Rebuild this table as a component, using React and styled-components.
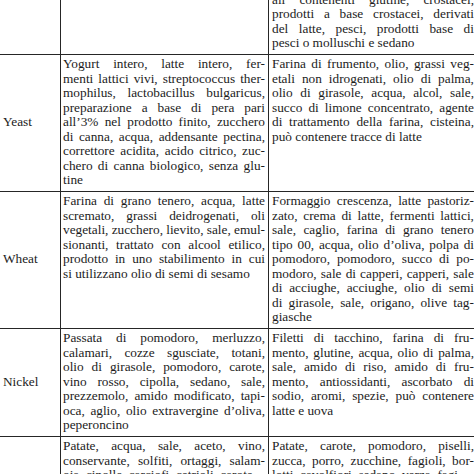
import React from "react";
import styled, { createGlobalStyle } from "styled-components";

const Global = createGlobalStyle`
  html, body { margin: 0; padding: 0; background: #fff; overflow: hidden; }
  body { font-family: "Liberation Serif", "Times New Roman", serif; color: #1c1c1c; }
`;

const Page = styled.div`
  width: 474px;
  height: 474px;
  overflow: hidden;
`;

const Table = styled.div`
  display: grid;
  grid-template-columns: 60px 208px 208px;
  margin-top: -9.5px;
  font-size: 13.3px;
  line-height: 14.5px;
`;

const Cell = styled.div`
  border-top: ${(p) => (p.$first ? "none" : "1px solid #262626")};
  border-left: ${(p) => (p.$col > 0 ? "1px solid #262626" : "none")};
  padding: 2px ${(p) => (p.$col === 2 ? "2px" : "3px")} 3.5px ${(p) => (p.$col === 1 ? "2px" : "3px")};
`;

const LabelCell = styled(Cell)`
  display: flex;
  align-items: center;
  padding-left: 3px;
`;

const Line = styled.div`
  display: flex;
  justify-content: ${(p) => (p.$last ? "flex-start" : "space-between")};
  gap: ${(p) => (p.$last ? "0.25em" : "2px")};
  white-space: nowrap;
`;

const Word = styled.span``;

function Para({ lines }) {
  return lines.map((l, i) => (
    <Line key={i} $last={i === lines.length - 1}>
      {l.split(" ").map((w, j) => (
        <Word key={j}>{w}</Word>
      ))}
    </Line>
  ));
}

const rows = [
  {
    label: "",
    a: [],
    b: [
      "ali contenenti glutine, crostacei,",
      "prodotti a base crostacei, derivati",
      "del latte, pesci, prodotti base di",
      "pesci o molluschi e sedano",
    ],
  },
  {
    label: "Yeast",
    a: [
      "Yogurt intero, latte intero, fer-",
      "menti lattici vivi, streptococcus ther-",
      "mophilus, lactobacillus bulgaricus,",
      "preparazione a base di pera pari",
      "all’3% nel prodotto finito, zucchero",
      "di canna, acqua, addensante pectina,",
      "correttore acidita, acido citrico, zuc-",
      "chero di canna biologico, senza glu-",
      "tine",
    ],
    b: [
      "Farina di frumento, olio, grassi veg-",
      "etali non idrogenati, olio di palma,",
      "olio di girasole, acqua, alcol, sale,",
      "succo di limone concentrato, agente",
      "di trattamento della farina, cisteina,",
      "può contenere tracce di latte",
    ],
  },
  {
    label: "Wheat",
    a: [
      "Farina di grano tenero, acqua, latte",
      "scremato, grassi deidrogenati, oli",
      "vegetali, zucchero, lievito, sale, emul-",
      "sionanti, trattato con alcool etilico,",
      "prodotto in uno stabilimento in cui",
      "si utilizzano olio di semi di sesamo",
    ],
    b: [
      "Formaggio crescenza, latte pastoriz-",
      "zato, crema di latte, fermenti lattici,",
      "sale, caglio, farina di grano tenero",
      "tipo 00, acqua, olio d’oliva, polpa di",
      "pomodoro, pomodoro, succo di po-",
      "modoro, sale di capperi, capperi, sale",
      "di acciughe, acciughe, olio di semi",
      "di girasole, sale, origano, olive tag-",
      "giasche",
    ],
  },
  {
    label: "Nickel",
    a: [
      "Passata di pomodoro, merluzzo,",
      "calamari, cozze sgusciate, totani,",
      "olio di girasole, pomodoro, carote,",
      "vino rosso, cipolla, sedano, sale,",
      "prezzemolo, amido modificato, tapi-",
      "oca, aglio, olio extravergine d’oliva,",
      "peperoncino",
    ],
    b: [
      "Filetti di tacchino, farina di fru-",
      "mento, glutine, acqua, olio di palma,",
      "sale, amido di riso, amido di fru-",
      "mento, antiossidanti, ascorbato di",
      "sodio, aromi, spezie, può contenere",
      "latte e uova",
    ],
  },
  {
    label: "",
    a: [
      "Patate, acqua, sale, aceto, vino,",
      "conservante, solfiti, ortaggi, salam-",
      "oia, cipolle, carciofi, cetrioli, carote",
    ],
    b: [
      "Patate, carote, pomodoro, piselli,",
      "zucca, porro, zucchine, fagioli, bor-",
      "lotti, cavolfiori, sedano, verza, fagi-",
    ],
  },
];

export default function App() {
  return (
    <Page>
      <Global />
      <Table>
        {rows.map((r, i) => (
          <React.Fragment key={i}>
            <LabelCell $col={0} $first={i === 0}>{r.label}</LabelCell>
            <Cell $col={1} $first={i === 0}>
              <Para lines={r.a} />
            </Cell>
            <Cell $col={2} $first={i === 0}>
              <Para lines={r.b} />
            </Cell>
          </React.Fragment>
        ))}
      </Table>
    </Page>
  );
}
